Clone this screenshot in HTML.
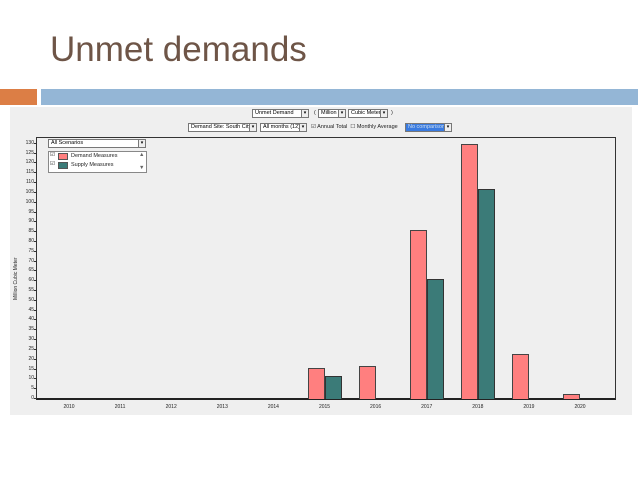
<!DOCTYPE html>
<html><head><meta charset="utf-8"><style>
*{margin:0;padding:0;box-sizing:border-box}
body{width:638px;height:478px;background:#fff;position:relative;overflow:hidden;font-family:"Liberation Sans",sans-serif}
.a{position:absolute}
.t{font-size:5.5px;color:#222;white-space:nowrap}
.sel{position:absolute;background:#fff;border:1px solid #777;height:9px;font-size:5.5px;line-height:7px;padding-left:2px;white-space:nowrap}
.arr{position:absolute;border:1px solid #777;background:#eee;width:8px;height:9px;font-size:5px;line-height:7px;text-align:center}
</style></head><body>
<div class="a" style="left:50px;top:30px;font-size:35px;color:#6e5547">Unmet demands</div>
<div class="a" style="left:0;top:89px;width:37px;height:16px;background:#dc7e45"></div>
<div class="a" style="left:41px;top:89px;width:597px;height:16px;background:#94b6d6"></div>
<div class="a" style="left:10px;top:107px;width:622px;height:308px;background:#efefef"></div>
<div class="sel" style="left:252px;top:109px;width:50px">Unmet Demand</div><div class="arr" style="left:301px;top:109px">▾</div>
<div class="a t" style="left:314px;top:110px">(</div>
<div class="sel" style="left:318px;top:109px;width:22px">Million</div><div class="arr" style="left:338px;top:109px">▾</div>
<div class="sel" style="left:348px;top:109px;width:34px">Cubic Meter</div><div class="arr" style="left:380px;top:109px">▾</div>
<div class="a t" style="left:391px;top:110px">)</div>
<div class="sel" style="left:188px;top:123px;width:62px">Demand Site: South City</div><div class="arr" style="left:249px;top:123px">▾</div>
<div class="sel" style="left:260px;top:123px;width:40px">All months (12)</div><div class="arr" style="left:299px;top:123px">▾</div>
<div class="a t" style="left:311px;top:124px">☑ Annual Total &nbsp;☐ Monthly Average</div>
<div class="sel" style="left:405px;top:123px;width:40px;background:#3a7be0;color:#cde"> No comparison</div><div class="arr" style="left:444px;top:123px">▾</div>
<div class="a" style="left:36px;top:137px;width:580px;height:263px;border:1px solid #333;border-bottom:2px solid #222"></div>
<div class="sel" style="left:48px;top:139px;width:98px">All Scenarios</div><div class="arr" style="left:138px;top:139px">▾</div>
<div class="a" style="left:48px;top:151px;width:99px;height:22px;background:#fff;border:1px solid #888"></div>
<div class="a t" style="left:50px;top:152px">☑</div><div class="a" style="left:58px;top:153px;width:10px;height:7px;background:#ff7f7f;border:1px solid #555"></div><div class="a t" style="left:71px;top:153px">Demand Measures</div>
<div class="a t" style="left:50px;top:161px">☑</div><div class="a" style="left:58px;top:162px;width:10px;height:7px;background:#3b7b78;border:1px solid #555"></div><div class="a t" style="left:71px;top:162px">Supply Measures</div>
<div class="a t" style="left:139px;top:152px;color:#666">▲</div><div class="a t" style="left:139px;top:165px;color:#666">▼</div>
<div class="a t" style="left:13px;top:300px;transform:rotate(-90deg);transform-origin:left top;font-size:5px">Million Cubic Meter</div>
<div id="y"></div><div id="b"></div>
<script>
var y='';for(var v=0;v<=130;v+=5){var p=398-v*1.963;y+='<div class="a t" style="left:22px;top:'+(p-3)+'px;width:12px;text-align:right;font-size:5px">'+v+'</div><div class="a" style="left:34px;top:'+p+'px;width:3px;height:1px;background:#333"></div>';}
document.getElementById('y').innerHTML=y;
var d=[[0,0],[0,0],[0,0],[0,0],[0,0],[16,11.5],[17,0],[86,61],[130,107],[23,0],[2.5,0]],b='';
for(var i=0;i<11;i++){var c=69+i*51.1;b+='<div class="a t" style="left:'+(c-8)+'px;top:404px;width:16px;text-align:center;font-size:5px">'+(2010+i)+'</div>';
var h1=d[i][0]*1.963,h2=d[i][1]*1.963;
if(h1>0)b+='<div class="a" style="left:'+(c-17)+'px;top:'+(399-h1)+'px;width:17px;height:'+h1+'px;background:#ff7f7f;border:1px solid #444;border-bottom:none"></div>';
if(h2>0)b+='<div class="a" style="left:'+c+'px;top:'+(399-h2)+'px;width:17px;height:'+h2+'px;background:#3b7b78;border:1px solid #333;border-bottom:none"></div>';}
document.getElementById('b').innerHTML=b;
</script>
</body></html>
